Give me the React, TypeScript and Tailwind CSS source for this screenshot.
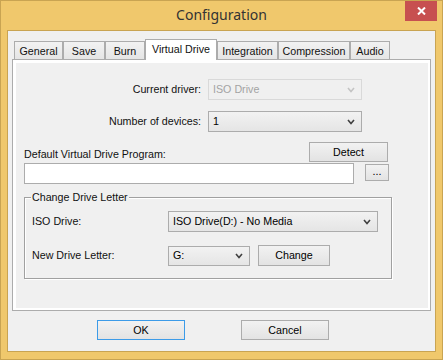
import React from "react";

const ui = { fontFamily: '"Liberation Sans", Arial, sans-serif' };

function Chevron({ disabled = false }: { disabled?: boolean }) {
  return (
    <svg width="8" height="6" viewBox="0 0 8 6" className="shrink-0">
      <polyline
        points="1,1 4,4.5 7,1"
        fill="none"
        stroke={disabled ? "#c4c4c4" : "#404040"}
        strokeWidth="1.6"
      />
    </svg>
  );
}

function Combo({
  value,
  width,
  height = 21,
  disabled = false,
}: {
  value: string;
  width: number;
  height?: number;
  disabled?: boolean;
}) {
  return (
    <div
      className={
        disabled
          ? "flex items-center justify-between border border-[#d9d9d9] bg-[#f0f0f0] pl-[4px] pr-[6px] text-[#a3a3a3]"
          : "flex items-center justify-between border border-[#acacac] bg-linear-to-b from-[#f2f2f2] to-[#e5e5e5] pl-[4px] pr-[6px] text-black"
      }
      style={{ width, height }}
    >
      <span>{value}</span>
      <Chevron disabled={disabled} />
    </div>
  );
}

function Button({
  label,
  className = "",
  focused = false,
}: {
  label: string;
  className?: string;
  focused?: boolean;
}) {
  return (
    <button
      className={
        "flex items-center justify-center border bg-linear-to-b from-[#f2f2f2] to-[#e3e3e3] text-black " +
        (focused ? "border-[#3c9be8] " : "border-[#acacac] ") +
        className
      }
    >
      {label}
    </button>
  );
}

const tabs = [
  { label: "General", w: 49 },
  { label: "Save", w: 42 },
  { label: "Burn", w: 40 },
  { label: "Virtual Drive", w: 72, active: true },
  { label: "Integration", w: 61 },
  { label: "Compression", w: 72 },
  { label: "Audio", w: 40 },
];

export default function App() {
  return (
    <div
      className="w-[443px] h-[360px] flex flex-col border border-[#c9a452] bg-[#f0c86c] px-[6px] pb-[7px] text-[10.7px] leading-[13px] text-[#111]"
      style={ui}
    >
      {/* title bar */}
      <div className="relative h-[29px] shrink-0 flex items-center justify-center">
        <span
          className="text-[14px] leading-[20px] text-[#333] -mt-[1px]"
          style={{ fontFamily: '"Segoe UI", "Noto Sans", sans-serif' }}
        >
          Configuration
        </span>
        <div className="absolute right-[-1px] top-0 w-[32px] h-[20px] bg-[#c75050] flex items-center justify-center">
          <svg width="9" height="8" viewBox="0 0 9 8">
            <path d="M1,0.5 L8,7.5 M8,0.5 L1,7.5" stroke="#fff" strokeWidth="2" />
          </svg>
        </div>
      </div>

      {/* client area */}
      <div className="flex-1 border border-[#c9a452] bg-[#f0f0f0] flex flex-col">
        {/* tab strip */}
        <div className="relative z-10 mt-[8px] ml-[6px] -mb-px flex items-end h-[21px]">
          {tabs.map((t) =>
            t.active ? (
              <div
                key={t.label}
                className="h-[21px] flex items-start justify-center pt-[3px] border-x border-t border-[#acacac] bg-white"
                style={{ width: t.w }}
              >
                {t.label}
              </div>
            ) : (
              <div
                key={t.label}
                className="h-[18px] mb-px flex items-center justify-center pt-[1px] border-x border-t border-[#acacac] bg-linear-to-b from-[#f2f2f2] to-[#e5e5e5]"
                style={{ width: t.w }}
              >
                {t.label}
              </div>
            )
          )}
        </div>

        {/* tab page */}
        <div className="ml-[4px] w-[419px] h-[252px] border border-[#acacac] bg-white pt-[3px] pl-[3px] pr-[2px] pb-[2px]">
          <div className="h-full bg-[#f0f0f0] flex flex-col">
            <div className="mt-[16px] flex items-center">
              <span className="w-[185px] text-right">Current driver:</span>
              <div className="ml-[7px]">
                <Combo value="ISO Drive" width={154} disabled />
              </div>
            </div>
            <div className="mt-[11px] flex items-center">
              <span className="w-[185px] text-right">Number of devices:</span>
              <div className="ml-[7px]">
                <Combo value="1" width={154} />
              </div>
            </div>

            <div className="mt-[10px] ml-[8px] w-[364px] flex items-end justify-between">
              <span className="mb-[1px]">Default Virtual Drive Program:</span>
              <Button label="Detect" className="w-[79px] h-[20px]" />
            </div>
            <div className="mt-[1px] ml-[8px] flex items-start">
              <div className="w-[330px] h-[21px] border border-[#acacac] bg-white" />
              <Button label="..." className="ml-[11px] mt-[1px] w-[24px] h-[17px] items-end pb-[2px]" />
            </div>

            {/* group box */}
            <div className="relative mt-[13px] ml-[8px] w-[368px] h-[82px] border border-[#a0a0a0] shadow-[inset_1px_1px_0_#ffffff,1px_1px_0_#ffffff] flex flex-col">
              <span className="absolute left-[6px] -top-[7px] px-[1px] bg-[#f0f0f0]">
                Change Drive Letter
              </span>
              <div className="mt-[13px] flex items-center">
                <span className="w-[143px] pl-[7px]">ISO Drive:</span>
                <Combo value="ISO Drive(D:) - No Media" width={210} />
              </div>
              <div className="mt-[13px] flex items-center">
                <span className="w-[143px] pl-[7px]">New Drive Letter:</span>
                <Combo value="G:" width={82} height={20} />
                <Button label="Change" className="ml-[8px] w-[72px] h-[21px]" />
              </div>
            </div>
          </div>
        </div>

        {/* dialog buttons */}
        <div className="mt-[9px] flex">
          <Button label="OK" focused className="ml-[89px] w-[88px] h-[20px]" />
          <Button label="Cancel" className="ml-[56px] w-[88px] h-[20px]" />
        </div>
      </div>
    </div>
  );
}
